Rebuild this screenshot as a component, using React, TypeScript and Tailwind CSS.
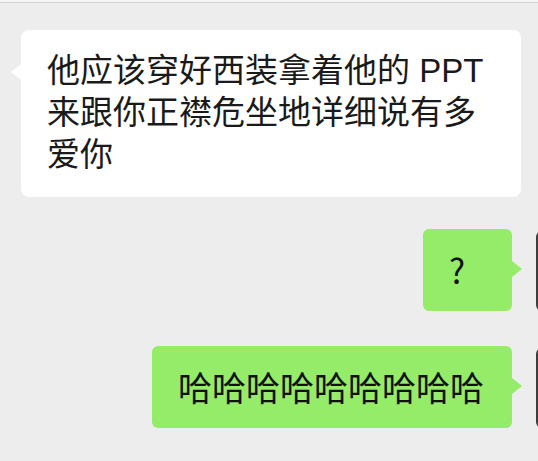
const font = { fontFamily: '"Noto Sans CJK SC", "Noto Sans", sans-serif' };
const mixed = { fontFamily: '"Liberation Sans", "Noto Sans CJK SC", sans-serif' };

function LeftBubble({ children }: { children: React.ReactNode }) {
  return (
    <div className="relative ml-[21px] w-[500px] rounded-[8px] bg-white pl-[26px] pr-[20px] pt-[20px] pb-[21px]">
      {/* tail */}
      <span className="absolute left-[-10px] top-[34px] h-0 w-0 border-y-[8px] border-r-[10px] border-y-transparent border-r-white" />
      <div className="whitespace-nowrap text-[33px] leading-[42px] text-[#1a1a1a]" style={mixed}>
        {children}
      </div>
    </div>
  );
}

function RightBubble({ text, width }: { text: string; width?: string }) {
  return (
    <div className="flex w-[616px] items-start justify-end gap-[24px]">
      <div
        className={`relative flex h-[82px] items-center rounded-[6px] bg-[#95ec69] pl-[26px] pr-[28px] ${width ?? ''}`}
      >
        <span className="whitespace-nowrap text-[34px] leading-none text-[#111]" style={font}>
          {text}
        </span>
        {/* tail */}
        <span className="absolute right-[-10px] top-[32px] h-0 w-0 border-y-[8px] border-l-[10px] border-y-transparent border-l-[#95ec69]" />
      </div>
      <div className="mt-[2px] h-[80px] w-[80px] shrink-0 rounded-[6px] bg-[#3d3d3d]" />
    </div>
  );
}

export default function App() {
  return (
    <div className="h-[461px] w-[538px] overflow-hidden bg-[#ededed]">
      <div className="h-[3px] border-b border-[#d4d4d4] bg-[#f4f4f4]" />
      <div className="flex flex-col pt-[27px]">
        <LeftBubble>
          <p>他应该穿好西装拿着他的 PPT</p>
          <p>来跟你正襟危坐地详细说有多</p>
          <p>爱你</p>
        </LeftBubble>
        <div className="mt-[32px]">
          <RightBubble text="?" width="w-[89px]" />
        </div>
        <div className="mt-[35px]">
          <RightBubble text="哈哈哈哈哈哈哈哈哈" />
        </div>
      </div>
    </div>
  );
}
